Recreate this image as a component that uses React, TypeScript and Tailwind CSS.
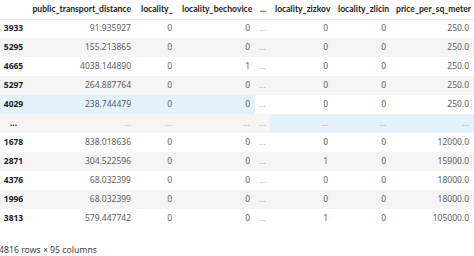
const columns = [
  'public_transport_distance',
  'locality_',
  'locality_bechovice',
  '...',
  'locality_zizkov',
  'locality_zlicin',
  'price_per_sq_meter',
];

const rows: string[][] = [
  ['3933', '91.935927', '0', '0', '...', '0', '0', '250.0'],
  ['5295', '155.213865', '0', '0', '...', '0', '0', '250.0'],
  ['4665', '4038.144890', '0', '1', '...', '0', '0', '250.0'],
  ['5297', '264.887764', '0', '0', '...', '0', '0', '250.0'],
  ['4029', '238.744479', '0', '0', '...', '0', '0', '250.0'],
  ['...', '...', '...', '...', '...', '...', '...', '...'],
  ['1678', '838.018636', '0', '0', '...', '0', '0', '12000.0'],
  ['2871', '304.522596', '0', '0', '...', '1', '0', '15900.0'],
  ['4376', '68.032399', '0', '0', '...', '0', '0', '18000.0'],
  ['1996', '68.032399', '0', '0', '...', '0', '0', '18000.0'],
  ['3813', '579.447742', '0', '0', '...', '1', '0', '105000.0'],
];

const widths = ['w-[27px]', 'w-[109px]', 'w-[41px]', 'w-[78px]', 'w-[15px]', 'w-[63px]', 'w-[58px]', 'w-[83px]'];

// the screenshot caught the hover highlight half-way across two rows
function cellBg(r: number, c: number) {
  if (r === 4) return c <= 3 ? 'bg-[#e3f2fb]' : 'bg-white';
  if (r === 5) return c <= 4 ? 'bg-[#f5f5f5]' : 'bg-[#e3f2fb]';
  return r % 2 === 1 ? 'bg-[#f5f5f5]' : 'bg-white';
}

export default function App() {
  return (
    <div className="w-[474px] h-[256px] bg-white overflow-hidden text-[8.5px]" style={{ fontFamily: '"Noto Sans", "Open Sans", sans-serif' }}>
      <table className="table-fixed border-collapse w-[474px]">
        <colgroup>
          {widths.map((w, i) => (
            <col key={i} className={w} />
          ))}
        </colgroup>
        <thead>
          <tr className="h-[19px] border-b border-[#e6e6e6]">
            <th />
            {columns.map((c) => (
              <th
                key={c}
                className="px-[5px] text-right font-bold text-[8.6px] text-[#222] whitespace-nowrap"
                style={{ fontFamily: 'Lato, "Noto Sans", sans-serif' }}
              >
                {c}
              </th>
            ))}
          </tr>
        </thead>
        <tbody>
          {rows.map((row, r) => (
            <tr key={r} className="h-[19px]">
              {row.map((v, c) =>
                c === 0 ? (
                  <th key={c} className={`text-center font-bold text-[#222] ${cellBg(r, c)}`}>
                    {v}
                  </th>
                ) : (
                  <td
                    key={c}
                    className={`whitespace-nowrap ${cellBg(r, c)} ${v === '...' ? 'text-[#aaa]' : 'text-[#606060]'} ${
                      c === 4 ? 'text-left px-[4px]' : 'text-right px-[5px]'
                    }`}
                  >
                    {v}
                  </td>
                )
              )}
            </tr>
          ))}
        </tbody>
      </table>
      <div className="mt-[16px] -ml-[1px] text-[8.7px] text-[#444]">4816 rows × 95 columns</div>
    </div>
  );
}
